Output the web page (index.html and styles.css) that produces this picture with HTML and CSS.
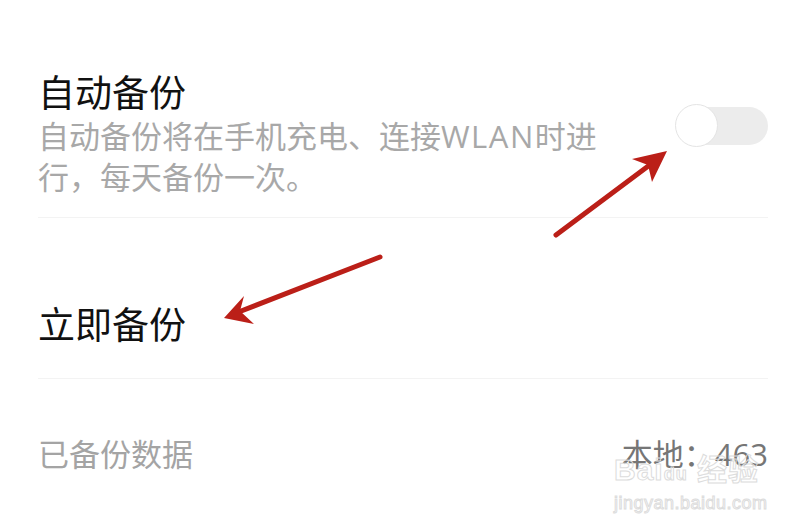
FILE: index.html
```html
<!DOCTYPE html>
<html lang="zh-CN">
<head>
  <meta charset="UTF-8">
  <title>备份</title>
  <link rel="stylesheet" href="styles.css">
</head>
<body>
  <div class="page">
    <div class="row row-auto">
      <div class="text">
        <div class="title">自动备份</div>
        <div class="desc">自动备份将在手机充电、连接<span class="latin">WLAN</span>时进行，每天备份一次。</div>
      </div>
      <div class="switch"><span class="knob"></span></div>
    </div>

    <div class="row row-now">
      <div class="title">立即备份</div>
    </div>

    <div class="row row-data">
      <div class="label">已备份数据</div>
      <div class="value">本地：463</div>
    </div>
  </div>

  <svg class="arrows" width="800" height="523" viewBox="0 0 800 523">
    <g stroke="#bb1f18" stroke-width="5" stroke-linecap="round" fill="none">
      <line x1="556" y1="235" x2="655" y2="161"/>
      <line x1="380" y1="257" x2="236" y2="313"/>
    </g>
    <g fill="#bb1f18">
      <path d="M667 151 L632 159 L648 165 L652 182 Z"/>
      <path d="M224 318 L244 296 L240 311 L254 324 Z"/>
    </g>
  </svg>

  <div class="watermark">
    <div class="wm-logo">Bai<span class="paw">du</span> 经验</div>
    <div class="wm-url">jingyan.baidu.com</div>
  </div>
</body>
</html>
```

FILE: styles.css
```css
body {
  margin: 0;
  background: #fff;
  font-family: "Open Sans", "Noto Sans CJK SC", sans-serif;
  width: 800px;
  height: 523px;
  overflow: hidden;
  position: relative;
}
.page {
  padding: 0 32px 0 38px;
}
.row {
  display: flex;
  justify-content: space-between;
  border-bottom: 1px solid #f3f3f3;
}
.row-auto {
  padding: 70px 0 19px;
  align-items: flex-start;
}
.row-now {
  padding: 84px 0 30px;
}
.row-data {
  border-bottom: none;
  padding-top: 55px;
}
.text {
  width: 578px;
}
.title {
  font-size: 37px;
  line-height: 46px;
  color: #111;
}
.desc {
  font-size: 31px;
  line-height: 41px;
  color: #a8a8a8;
}
.latin {
  letter-spacing: 1.5px;
}
.label {
  font-size: 31px;
  line-height: 41px;
  color: #a4a4a4;
}
.value {
  font-size: 31px;
  line-height: 41px;
  color: #767676;
}
.switch {
  margin-top: 37px;
  width: 92px;
  height: 38px;
  border-radius: 19px;
  background: #ececec;
  position: relative;
}
.knob {
  position: absolute;
  left: -1px;
  top: -3px;
  width: 43px;
  height: 43px;
  border-radius: 50%;
  background: #fff;
  border: 1px solid #e4e4e4;
  box-sizing: border-box;
}
.arrows {
  position: absolute;
  left: 0;
  top: 0;
}
.watermark {
  position: absolute;
  left: 614px;
  top: 452px;
  color: transparent;
  -webkit-text-stroke: 1px #dcdcdc;
  font-family: "Liberation Sans", "Noto Sans CJK SC", sans-serif;
}
.wm-logo {
  font-size: 30px;
  font-weight: bold;
  line-height: 36px;
  letter-spacing: 1px;
}
.paw {
  font-size: 18px;
}
.wm-url {
  font-size: 18px;
  line-height: 22px;
  letter-spacing: 0.5px;
}
```
